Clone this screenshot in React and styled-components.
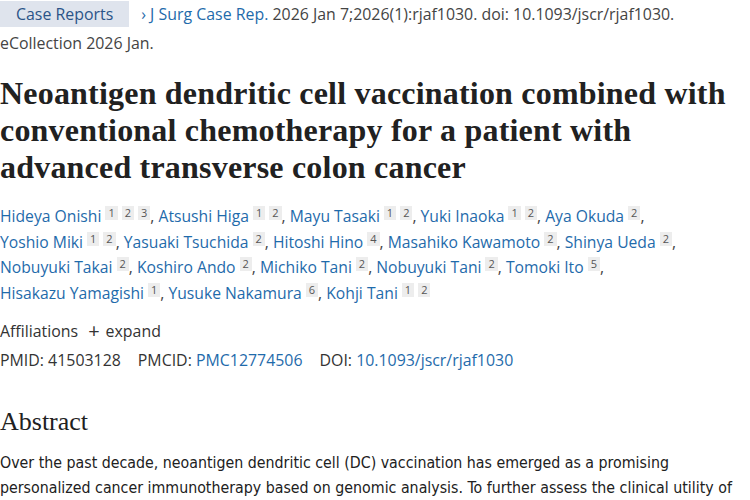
import styled, { createGlobalStyle } from "styled-components";

const GlobalStyle = createGlobalStyle`
  html, body {
    margin: 0;
    padding: 0;
    background: #fff;
  }
  body {
    font-family: "Open Sans", "Noto Sans", sans-serif;
    color: #212121;
  }
`

const Page = styled.div`
  width: 750px;
  height: 500px;
  overflow: hidden;
`

const Header = styled.div`
  font-size: 15.9px;
  line-height: 29px;
  color: #444;
`

const Badge = styled.span`
  display: inline-block;
  background: #dfe4ed;
  color: #2b5488;
  padding: 0 16px;
  line-height: 26px;
  margin-right: 12px;
`

const Cite = styled.span`
  color: #1f6bab;
`

const Title = styled.h1`
  font-family: "Liberation Serif", serif;
  font-weight: bold;
  font-size: 32px;
  line-height: 37px;
  letter-spacing: 0.2px;
  color: #212121;
  max-width: 745px;
  margin: 17px 0 18px;
`

const Authors = styled.div`
  font-size: 15.7px;
  line-height: 25.5px;
  color: #444;
`

const Author = styled.a`
  color: #1f6bab;
  text-decoration: none;
`

const Ref = styled.sup`
  display: inline-block;
  background: #ededed;
  color: #555;
  font-size: 11px;
  line-height: 14px;
  padding: 0 3px;
  margin-left: 4px;
  vertical-align: 5px;
`

const Meta = styled.div`
  font-size: 15.9px;
  line-height: 28px;
  color: #333;
  margin-top: 11px;
`

const Expand = styled.span`
  margin-left: 10px;
`

const Plus = styled.span`
  font-size: 20px;
  margin-right: 6px;
  vertical-align: -1px;
`

const Ids = styled.div`
  display: flex;
  gap: 17px;
  margin-top: 1px;
`

const Link = styled.span`
  color: #1f6bab;
`

const AbstractTitle = styled.h2`
  font-family: "Liberation Serif", serif;
  font-weight: normal;
  font-size: 26px;
  line-height: 30px;
  color: #212121;
  margin: 33px 0 13px;
`

const Para = styled.p`
  font-family: "DejaVu Sans Condensed", "Liberation Sans Narrow", "Liberation Sans", sans-serif;
  font-size: 15.8px;
  line-height: 25px;
  color: #212121;
  width: 752px;
  margin: 0;
`

const authors = [
  ["Hideya Onishi", [1, 2, 3]],
  ["Atsushi Higa", [1, 2]],
  ["Mayu Tasaki", [1, 2]],
  ["Yuki Inaoka", [1, 2]],
  ["Aya Okuda", [2]],
  null,
  ["Yoshio Miki", [1, 2]],
  ["Yasuaki Tsuchida", [2]],
  ["Hitoshi Hino", [4]],
  ["Masahiko Kawamoto", [2]],
  ["Shinya Ueda", [2]],
  null,
  ["Nobuyuki Takai", [2]],
  ["Koshiro Ando", [2]],
  ["Michiko Tani", [2]],
  ["Nobuyuki Tani", [2]],
  ["Tomoki Ito", [5]],
  null,
  ["Hisakazu Yamagishi", [1]],
  ["Yusuke Nakamura", [6]],
  ["Kohji Tani", [1, 2]],
]

export default function App() {
  const list = authors.filter(Boolean)
  let idx = 0
  return (
    <Page>
      <GlobalStyle />
      <Header>
        <Badge>Case Reports</Badge>
        <Cite>› J Surg Case Rep.</Cite> 2026 Jan 7;2026(1):rjaf1030. doi: 10.1093/jscr/rjaf1030.
        <br />
        eCollection 2026 Jan.
      </Header>
      <Title>
        Neoantigen dendritic cell vaccination combined with conventional chemotherapy for a patient with advanced transverse colon cancer
      </Title>
      <Authors>
        {authors.map((a, i) => {
          if (!a) return <br key={i} />
          idx++
          const last = idx === list.length
          return (
            <span key={i}>
              <Author>{a[0]}</Author>
              {a[1].map(n => <Ref key={n}>{n}</Ref>)}
              {last ? "" : ", "}
            </span>
          )
        })}
      </Authors>
      <Meta>
        <div>Affiliations<Expand><Plus>+</Plus>expand</Expand></div>
        <Ids>
          <span>PMID: 41503128</span>
          <span>PMCID: <Link>PMC12774506</Link></span>
          <span>DOI: <Link>10.1093/jscr/rjaf1030</Link></span>
        </Ids>
      </Meta>
      <AbstractTitle>Abstract</AbstractTitle>
      <Para>
        Over the past decade, neoantigen dendritic cell (DC) vaccination has emerged as a promising
        <br />
        personalized cancer immunotherapy based on genomic analysis. To further assess the clinical utility of
      </Para>
    </Page>
  )
}
